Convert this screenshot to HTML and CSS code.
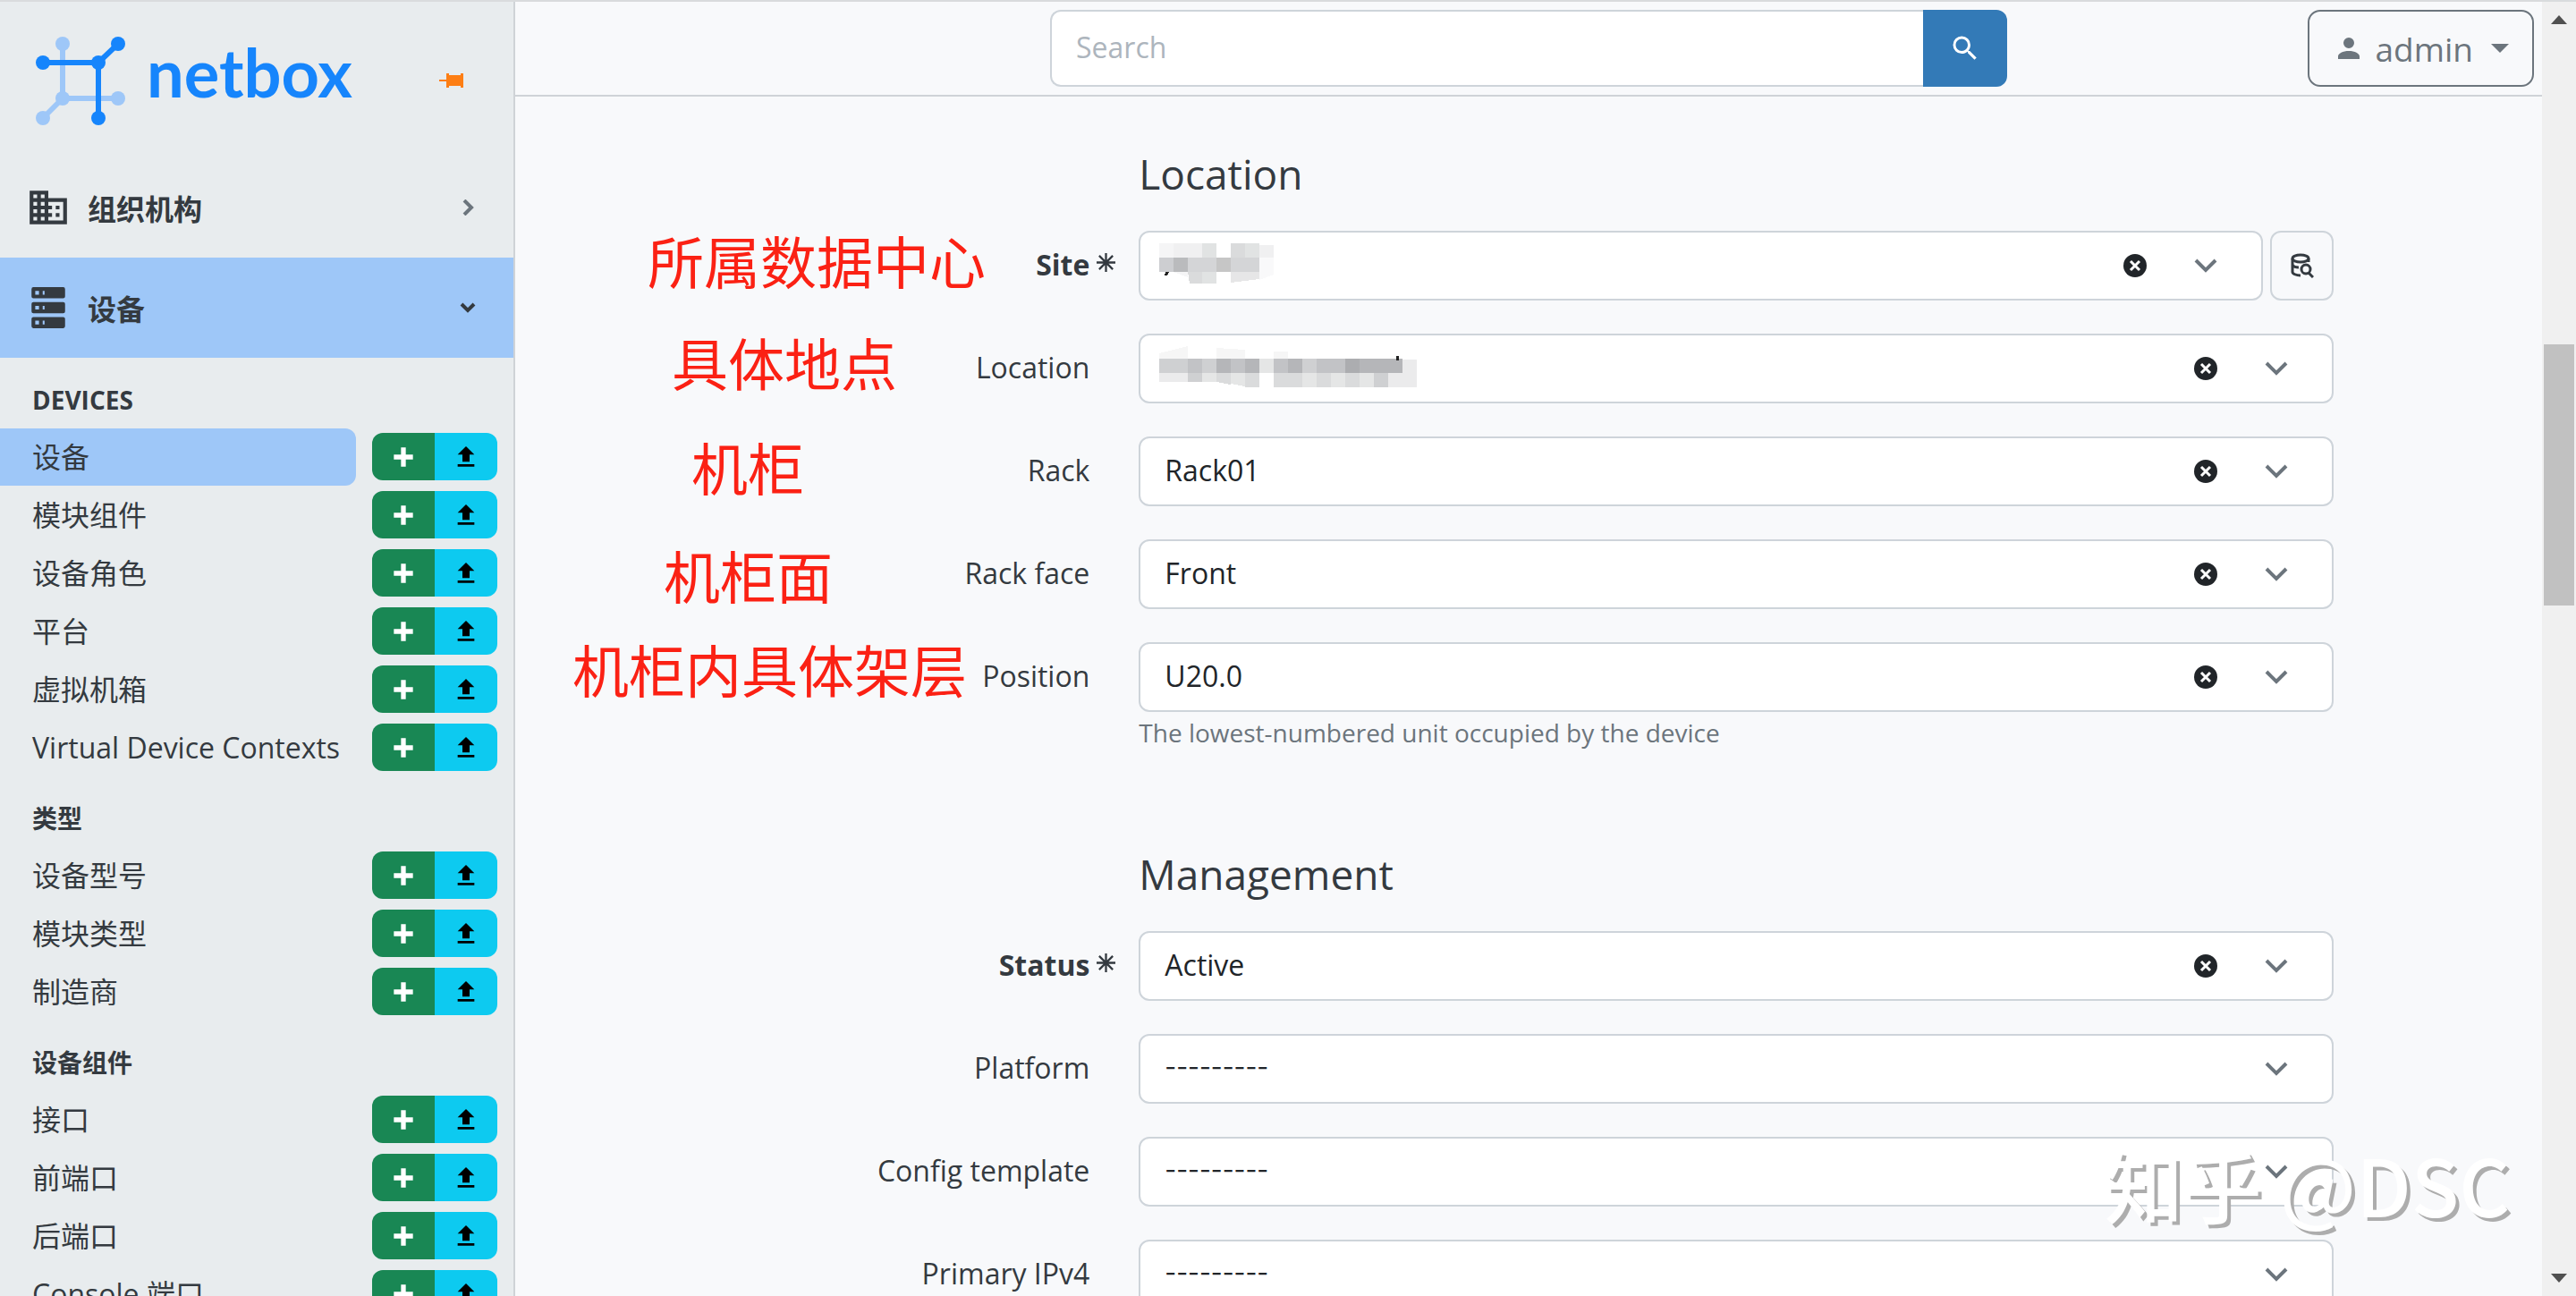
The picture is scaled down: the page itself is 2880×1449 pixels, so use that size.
FILE: index.html
```html
<!DOCTYPE html>
<html lang="zh-CN">
<head>
    <meta charset="UTF-8">
    <meta name="viewport" content="width=device-width, initial-scale=1.0">
    <title>NetBox - Device</title>
    <link rel="stylesheet" href="styles.css">
</head>
<body>
    <!-- Shared icons -->
    <svg class="sprite" aria-hidden="true">
        <symbol id="i-plus" viewBox="0 0 24 24"><path d="M20 14H14V20H10V14H4V10H10V4H14V10H20V14Z"/></symbol>
        <symbol id="i-upload" viewBox="0 0 24 24"><path d="M9,16V10H5L12,3L19,10H15V16H9M5,20V18H19V20H5Z"/></symbol>
        <symbol id="i-down" viewBox="0 0 26 16"><path d="M2 2L13 13L24 2" fill="none" stroke="currentColor" stroke-width="4"/></symbol>
        <symbol id="i-clear" viewBox="0 0 28 28"><circle cx="14" cy="14" r="13"/><path d="M9 9L19 19M19 9L9 19" stroke="#fff" stroke-width="3"/></symbol>
        <symbol id="i-star" viewBox="0 0 22 22"><path d="M11 0V22M0 11H22M3 3L19 19M19 3L3 19" stroke="currentColor" stroke-width="2.4"/></symbol>
    </svg>

    <nav class="sidebar">
        <div class="brand">
            <a class="logo" href="#">
                <svg class="logo-mark" viewBox="0 0 100 100">
                    <g fill="#9ec7f8" stroke="#9ec7f8">
                        <path d="M30 9V70H92M30 70L8 92" fill="none" stroke-width="6"/>
                        <g stroke="none"><circle cx="30" cy="9" r="8"/><circle cx="30" cy="70" r="8"/><circle cx="92" cy="70" r="8"/><circle cx="8" cy="92" r="8"/></g>
                    </g>
                    <g fill="#1685fc" stroke="#1685fc">
                        <path d="M8 30H70V92M70 30L92 9" fill="none" stroke-width="6"/>
                        <g stroke="none"><circle cx="8" cy="30" r="8"/><circle cx="70" cy="30" r="8"/><circle cx="92" cy="9" r="8"/><circle cx="70" cy="92" r="8"/></g>
                    </g>
                </svg>
                <span class="logo-text">netbox</span>
            </a>
            <button class="pin" type="button" aria-label="Pin sidebar">
                <svg viewBox="0 0 27 16"><path d="M0 7H8V0H11V2H24V0H27V16H24V14H11V16H8V9H0Z"/></svg>
            </button>
        </div>

        <button class="menu" type="button">
            <svg class="menu-icon" viewBox="0 0 24 24"><path d="M18,15H16V17H18M18,11H16V13H18M20,19H12V17H14V15H12V13H14V11H12V9H20M10,7H8V5H10M10,11H8V9H10M10,15H8V13H10M10,19H8V17H10M6,7H4V5H6M6,11H4V9H6M6,15H4V13H6M6,19H4V17H6M12,7V3H2V21H22V7H12Z"/></svg>
            <span>组织机构</span>
            <svg class="menu-arrow closed" viewBox="0 0 18 18"><path d="M5 1L13 9L5 17" /></svg>
        </button>
        <button class="menu active" type="button">
            <svg class="menu-icon" viewBox="0 0 24 24"><path d="M4,1H20A1,1 0 0,1 21,2V6A1,1 0 0,1 20,7H4A1,1 0 0,1 3,6V2A1,1 0 0,1 4,1M4,9H20A1,1 0 0,1 21,10V14A1,1 0 0,1 20,15H4A1,1 0 0,1 3,14V10A1,1 0 0,1 4,9M4,17H20A1,1 0 0,1 21,18V22A1,1 0 0,1 20,23H4A1,1 0 0,1 3,22V18A1,1 0 0,1 4,17M9,5H10V3H9V5M9,13H10V11H9V13M9,21H10V19H9V21M5,3V5H7V3H5M5,11V13H7V11H5M5,19V21H7V19H5Z"/></svg>
            <span>设备</span>
            <svg class="menu-arrow" viewBox="0 0 18 18"><path d="M2 5L9 12L16 5"/></svg>
        </button>

        <h6 class="group">DEVICES</h6>
        <div class="item active"><a href="#">设备</a><button class="add" type="button" aria-label="Add"><svg><use href="#i-plus"/></svg></button><button class="import" type="button" aria-label="Import"><svg><use href="#i-upload"/></svg></button></div>
        <div class="item"><a href="#">模块组件</a><button class="add" type="button" aria-label="Add"><svg><use href="#i-plus"/></svg></button><button class="import" type="button" aria-label="Import"><svg><use href="#i-upload"/></svg></button></div>
        <div class="item"><a href="#">设备角色</a><button class="add" type="button" aria-label="Add"><svg><use href="#i-plus"/></svg></button><button class="import" type="button" aria-label="Import"><svg><use href="#i-upload"/></svg></button></div>
        <div class="item"><a href="#">平台</a><button class="add" type="button" aria-label="Add"><svg><use href="#i-plus"/></svg></button><button class="import" type="button" aria-label="Import"><svg><use href="#i-upload"/></svg></button></div>
        <div class="item"><a href="#">虚拟机箱</a><button class="add" type="button" aria-label="Add"><svg><use href="#i-plus"/></svg></button><button class="import" type="button" aria-label="Import"><svg><use href="#i-upload"/></svg></button></div>
        <div class="item"><a href="#">Virtual Device Contexts</a><button class="add" type="button" aria-label="Add"><svg><use href="#i-plus"/></svg></button><button class="import" type="button" aria-label="Import"><svg><use href="#i-upload"/></svg></button></div>

        <h6 class="group">类型</h6>
        <div class="item"><a href="#">设备型号</a><button class="add" type="button" aria-label="Add"><svg><use href="#i-plus"/></svg></button><button class="import" type="button" aria-label="Import"><svg><use href="#i-upload"/></svg></button></div>
        <div class="item"><a href="#">模块类型</a><button class="add" type="button" aria-label="Add"><svg><use href="#i-plus"/></svg></button><button class="import" type="button" aria-label="Import"><svg><use href="#i-upload"/></svg></button></div>
        <div class="item"><a href="#">制造商</a><button class="add" type="button" aria-label="Add"><svg><use href="#i-plus"/></svg></button><button class="import" type="button" aria-label="Import"><svg><use href="#i-upload"/></svg></button></div>

        <h6 class="group">设备组件</h6>
        <div class="item"><a href="#">接口</a><button class="add" type="button" aria-label="Add"><svg><use href="#i-plus"/></svg></button><button class="import" type="button" aria-label="Import"><svg><use href="#i-upload"/></svg></button></div>
        <div class="item"><a href="#">前端口</a><button class="add" type="button" aria-label="Add"><svg><use href="#i-plus"/></svg></button><button class="import" type="button" aria-label="Import"><svg><use href="#i-upload"/></svg></button></div>
        <div class="item"><a href="#">后端口</a><button class="add" type="button" aria-label="Add"><svg><use href="#i-plus"/></svg></button><button class="import" type="button" aria-label="Import"><svg><use href="#i-upload"/></svg></button></div>
        <div class="item"><a href="#">Console 端口</a><button class="add" type="button" aria-label="Add"><svg><use href="#i-plus"/></svg></button><button class="import" type="button" aria-label="Import"><svg><use href="#i-upload"/></svg></button></div>
    </nav>

    <main class="main">
        <header class="topbar">
            <form class="search">
                <input type="text" placeholder="Search" aria-label="Search">
                <button type="button" aria-label="Search">
                    <svg viewBox="0 0 24 24"><path d="M9.5,3A6.5,6.5 0 0,1 16,9.5C16,11.11 15.41,12.59 14.44,13.73L14.71,14H15.5L20.5,19L19,20.5L14,15.5V14.71L13.73,14.44C12.59,15.41 11.11,16 9.5,16A6.5,6.5 0 0,1 3,9.5A6.5,6.5 0 0,1 9.5,3M9.5,5C7,5 5,7 5,9.5C5,12 7,14 9.5,14C12,14 14,12 14,9.5C14,7 12,5 9.5,5Z"/></svg>
                </button>
            </form>
            <button class="user" type="button">
                <svg class="user-icon" viewBox="0 0 24 24"><path d="M12,4A4,4 0 0,1 16,8A4,4 0 0,1 12,12A4,4 0 0,1 8,8A4,4 0 0,1 12,4M12,14C16.42,14 20,15.79 20,18V20H4V18C4,15.79 7.58,14 12,14Z"/></svg>
                admin
                <svg class="caret" viewBox="0 0 20 10"><path d="M0 0H20L10 10Z"/></svg>
            </button>
        </header>

        <form class="device-form">
            <section>
                <h2>Location</h2>
                <div class="row">
                    <span class="note note-site">所属数据中心</span>
                    <label class="required" for="site">Site <svg><use href="#i-star"/></svg></label>
                    <div class="field">
                        <div class="select">
                            <select id="site"><option></option></select>
                            <!-- hidden value -->
                            <svg class="mosaic mosaic-site" viewBox="0 0 128 46" shape-rendering="crispEdges">
                                <path fill="#f5f5f6" d="M0 0h16v16H0zM16 32h16v6z"/>
                                <path fill="#f0f0f1" d="M16 0h32v16H16zM112 2h16v14h-16z"/>
                                <path fill="#e1e3e3" d="M48 0h16v16H48zM96 0h16v16H96zM48 32h16v13H48z"/>
                                <path fill="#dadbdc" d="M80 0h16v16H80zM32 32h16v13H34z"/>
                                <path fill="#cdced1" d="M0 16h16v16H0z"/>
                                <path fill="#babbbd" d="M16 16h16v16H16z"/>
                                <path fill="#d4d5d7" d="M32 16h32v16H32zM80 16h32v16H80z"/>
                                <path fill="#c6c6c6" d="M64 16h16v16H64z"/>
                                <path fill="#f9f9fa" d="M112 16h16v19l-16 6z"/>
                                <path fill="#e6e6e7" d="M80 32h32v8l-32 4z"/>
                                <path fill="#222" d="M7 32h4l-2 4H6z"/>
                            </svg>
                            <button class="clear" type="button" aria-label="Clear"><svg><use href="#i-clear"/></svg></button>
                            <svg class="arrow"><use href="#i-down"/></svg>
                        </div>
                        <button class="lookup" type="button" aria-label="Advanced search">
                            <svg viewBox="0 0 26 28"><ellipse cx="11" cy="6" rx="9" ry="4"/><path d="M2 6V21C2 23 6 25 11 25M2 13C3 15 5 16 9 16M2 14C3 15 5 16 9 16M20 6V10"/><circle cx="17" cy="18" r="5"/><path d="M20 22L25 27"/></svg>
                        </button>
                    </div>
                </div>
                <div class="row">
                    <span class="note note-location">具体地点</span>
                    <label for="location">Location</label>
                    <div class="field">
                        <div class="select">
                            <select id="location"><option></option></select>
                            <svg class="mosaic mosaic-location" viewBox="0 0 288 46" shape-rendering="crispEdges">
                                <path fill="#f6f6f6" d="M0 8l32-8v14H0zM64 2l32 2v10H64zM128 6h16v8h-16z"/>
                                <path fill="#cfd0d2" d="M0 14h32v16H0zM48 14h16v16H48zM160 14h16v16h-16zM32 30h16v10H32zM240 30h16v16h-16z"/>
                                <path fill="#c2c3c6" d="M32 14h16v16H32zM80 14h16v16H80zM128 14h16v16h-16zM176 14h32v16h-32z"/>
                                <path fill="#b5b6b9" d="M64 14h16v16H64zM96 14h16v16H96zM144 14h16v16h-16zM224 14h48v16h-48z"/>
                                <path fill="#acadb0" d="M208 14h16v16h-16z"/>
                                <path fill="#e5e6e6" d="M112 14h16v16h-16zM48 30h16v10H48zM80 30h16v15l-16-3zM160 30h16v16h-16zM192 30h16v16h-16zM224 30h16v16h-16z"/>
                                <path fill="#ebebec" d="M0 30h32v10H0zM256 30h32v16h-32zM272 15h16v15h-16z"/>
                                <path fill="#dadbdc" d="M64 30h16v13l-16-3zM96 30h16v16H96zM128 30h32v16h-32zM176 30h16v16h-16zM208 30h16v16h-16z"/>
                                <path fill="#222" d="M265 11h3v5h-3z"/>
                            </svg>
                            <button class="clear" type="button" aria-label="Clear"><svg><use href="#i-clear"/></svg></button>
                            <svg class="arrow"><use href="#i-down"/></svg>
                        </div>
                    </div>
                </div>
                <div class="row">
                    <span class="note note-rack">机柜</span>
                    <label for="rack">Rack</label>
                    <div class="field">
                        <div class="select">
                            <select id="rack"><option>Rack01</option></select>
                            <button class="clear" type="button" aria-label="Clear"><svg><use href="#i-clear"/></svg></button>
                            <svg class="arrow"><use href="#i-down"/></svg>
                        </div>
                    </div>
                </div>
                <div class="row">
                    <span class="note note-face">机柜面</span>
                    <label for="face">Rack face</label>
                    <div class="field">
                        <div class="select">
                            <select id="face"><option>Front</option></select>
                            <button class="clear" type="button" aria-label="Clear"><svg><use href="#i-clear"/></svg></button>
                            <svg class="arrow"><use href="#i-down"/></svg>
                        </div>
                    </div>
                </div>
                <div class="row">
                    <span class="note note-position">机柜内具体架层</span>
                    <label for="position">Position</label>
                    <div class="field">
                        <div class="select">
                            <select id="position"><option>U20.0</option></select>
                            <button class="clear" type="button" aria-label="Clear"><svg><use href="#i-clear"/></svg></button>
                            <svg class="arrow"><use href="#i-down"/></svg>
                        </div>
                        <p class="help">The lowest-numbered unit occupied by the device</p>
                    </div>
                </div>
            </section>

            <section>
                <h2>Management</h2>
                <div class="row">
                    <label class="required" for="status">Status <svg><use href="#i-star"/></svg></label>
                    <div class="field">
                        <div class="select">
                            <select id="status"><option>Active</option></select>
                            <button class="clear" type="button" aria-label="Clear"><svg><use href="#i-clear"/></svg></button>
                            <svg class="arrow"><use href="#i-down"/></svg>
                        </div>
                    </div>
                </div>
                <div class="row">
                    <label for="platform">Platform</label>
                    <div class="field">
                        <div class="select">
                            <select class="empty" id="platform"><option>---------</option></select>
                            <svg class="arrow"><use href="#i-down"/></svg>
                        </div>
                    </div>
                </div>
                <div class="row">
                    <label for="template">Config template</label>
                    <div class="field">
                        <div class="select">
                            <select class="empty" id="template"><option>---------</option></select>
                            <svg class="arrow"><use href="#i-down"/></svg>
                        </div>
                    </div>
                </div>
                <div class="row">
                    <label for="ipv4">Primary IPv4</label>
                    <div class="field">
                        <div class="select">
                            <select class="empty" id="ipv4"><option>---------</option></select>
                            <svg class="arrow"><use href="#i-down"/></svg>
                        </div>
                    </div>
                </div>
            </section>
        </form>
    </main>

    <div class="scrollbar" aria-hidden="true">
        <svg viewBox="0 0 18 10"><path d="M0 10H18L9 0Z"/></svg>
        <div class="track"><div class="thumb"></div></div>
        <svg viewBox="0 0 18 10"><path d="M0 0H18L9 10Z"/></svg>
    </div>

    <div class="watermark">知乎 @DSC</div>
</body>
</html>
```
FILE: styles.css
```css
* {
    box-sizing: border-box;
}

body {
    margin: 0;
    height: 100vh;
    display: flex;
    overflow: hidden;
    position: relative;
    border-top: 2px solid #d9dbdd;
    font-family: "Open Sans", "Noto Sans CJK SC", sans-serif;
    font-size: 32px;
    color: #343a40;
    background-color: #f8f9fb;
}

button,
input,
select {
    font: inherit;
    color: inherit;
    margin: 0;
    padding: 0;
    border: 0;
    background: none;
}

svg {
    display: block;
    flex: none;
    fill: currentColor;
}

.sprite {
    position: absolute;
    width: 0;
    height: 0;
}

/* Sidebar */
.sidebar {
    width: 20%;
    flex: none;
    overflow: hidden;
    background-color: #e8ecee;
    border-right: 2px solid #cfd3d7;
}

.brand {
    height: 174px;
    padding: 0 56px 0 40px;
    display: flex;
    align-items: flex-start;
    justify-content: space-between;
}

.logo {
    display: flex;
    gap: 24px;
    padding-top: 38px;
    color: #1685fc;
    text-decoration: none;
}

.logo-mark {
    width: 100px;
    height: 100px;
}

.logo-text {
    font-family: Lato, sans-serif;
    font-weight: bold;
    font-size: 74px;
    line-height: 82px;
}

.pin {
    margin-top: 80px;
    color: #fd7e14;
}

.pin svg {
    width: 27px;
    height: 16px;
}

.menu {
    width: 100%;
    height: 112px;
    padding: 0 42px 0 29px;
    display: flex;
    align-items: center;
    font-weight: bold;
    text-align: left;
}

.menu.active {
    background-color: #9ec7f8;
}

.menu span {
    flex: 1;
    margin-left: 19px;
}

.menu-icon {
    width: 50px;
    height: 50px;
}

.menu-arrow {
    width: 18px;
    height: 18px;
    fill: none;
    stroke: currentColor;
    stroke-width: 4;
}

.menu-arrow.closed {
    color: #6c757d;
}

.group {
    margin: 0;
    padding: 30px 36px 14px;
    font-size: 28px;
    line-height: 34px;
}

.item {
    display: flex;
    align-items: center;
    height: 65px;
    padding-right: 18px;
}

.item a {
    flex: 1;
    margin-right: 18px;
    padding-left: 36px;
    line-height: 64px;
    color: inherit;
    text-decoration: none;
    white-space: nowrap;
    border-radius: 0 12px 12px 0;
}

.item.active a {
    background-color: #9ec7f8;
}

.item button {
    width: 70px;
    height: 53px;
    display: flex;
    align-items: center;
    justify-content: center;
}

.item button svg {
    width: 32px;
    height: 32px;
}

.add {
    color: #fff;
    background-color: #198754;
    border-radius: 12px 0 0 12px;
}

.import {
    color: #000;
    background-color: #0dcaf0;
    border-radius: 0 12px 12px 0;
}

/* Top bar */
.main {
    flex: 1;
    min-width: 0;
}

.topbar {
    height: 106px;
    padding: 0 9px;
    display: grid;
    grid-template-columns: 1fr 1070px 1fr;
    align-items: center;
    border-bottom: 2px solid #cfd3d7;
}

.search {
    grid-column: 2;
    display: flex;
    height: 86px;
}

.search input {
    flex: 1;
    min-width: 0;
    padding: 0 27px 4px;
    background-color: #fff;
    border: 2px solid #ced4da;
    border-right: 0;
    border-radius: 12px 0 0 12px;
}

.search input::placeholder {
    color: #adb5bd;
    opacity: 1;
}

.search button {
    width: 94px;
    display: flex;
    align-items: center;
    justify-content: center;
    color: #fff;
    background-color: #337ab7;
    border-radius: 0 12px 12px 0;
}

.search button svg {
    width: 36px;
    height: 36px;
}

.user {
    justify-self: end;
    height: 86px;
    padding: 0 26px;
    display: flex;
    align-items: center;
    font-size: 37px;
    color: #6c757d;
    border: 2px solid #6c757d;
    border-radius: 14px;
}

.user-icon {
    width: 36px;
    height: 36px;
    margin-right: 12px;
}

.caret {
    width: 20px;
    height: 10px;
    margin-left: 20px;
}

/* Form */
.device-form {
    padding: 58px 233px 0 0;
}

.device-form section {
    margin-bottom: 112px;
}

.device-form h2 {
    margin: 0 0 36px 34.3%;
    font-size: 46px;
    font-weight: normal;
    line-height: 56px;
}

.row {
    position: relative;
    display: grid;
    grid-template-columns: 34.3% 1fr;
    margin-bottom: 37px;
}

.row:last-child {
    margin-bottom: 0;
}

.row label {
    padding-right: 55px;
    line-height: 76px;
    text-align: right;
}

.row .required {
    display: flex;
    align-items: center;
    justify-content: flex-end;
    gap: 8px;
    height: 76px;
    padding-right: 26px;
    font-weight: bold;
}

.required svg {
    width: 21px;
    height: 21px;
    margin-bottom: 6px;
}

.field {
    display: flex;
    flex-wrap: wrap;
    gap: 5px 8px;
}

.select {
    position: relative;
    flex: 1;
    height: 78px;
    padding-right: 49px;
    display: flex;
    align-items: center;
    background-color: #fff;
    border: 2px solid #ced4da;
    border-radius: 12px;
}

.select select {
    flex: 1;
    height: 74px;
    padding: 0 27px 4px;
    appearance: none;
    color: #212529;
}

.select .empty {
    font-family: Inter, sans-serif;
    font-size: 28px;
}

.clear {
    margin-right: 52px;
    color: #212529;
}

.clear svg {
    width: 28px;
    height: 28px;
}

.arrow {
    width: 26px;
    height: 16px;
    color: #6c757d;
}

.lookup {
    width: 71px;
    height: 78px;
    display: flex;
    align-items: center;
    justify-content: center;
    border: 2px solid #ced4da;
    border-radius: 12px;
}

.lookup svg {
    width: 26px;
    height: 28px;
    fill: none;
    stroke: currentColor;
    stroke-width: 3;
}

.help {
    width: 100%;
    margin: 0;
    font-size: 28px;
    line-height: 36px;
    color: #6c757d;
}

/* Blocks that hide a value */
.mosaic {
    position: absolute;
    left: 21px;
    top: 12px;
    height: 46px;
}

.mosaic-site {
    width: 128px;
}

.mosaic-location {
    width: 288px;
}

/* Red notes beside the labels */
.note {
    position: absolute;
    font-size: 63px;
    line-height: 76px;
    color: #fb2114;
    white-space: nowrap;
}

.note-site {
    left: 148px;
    top: -3px;
}

.note-location {
    left: 175px;
    top: -4px;
}

.note-rack {
    left: 197px;
    top: -2px;
}

.note-face {
    left: 166px;
    top: 4px;
}

.note-position {
    left: 64px;
    top: -6px;
}

/* Scrollbar */
.scrollbar {
    width: 38px;
    flex: none;
    padding: 15px 2px;
    display: flex;
    flex-direction: column;
    align-items: center;
    color: #505050;
    background-color: #f0f0f0;
}

.scrollbar svg {
    width: 18px;
    height: 10px;
}

.track {
    flex: 1;
    width: 100%;
    padding-top: 358px;
}

.thumb {
    height: 292px;
    background-color: #c1c1c1;
}

.watermark {
    position: absolute;
    right: 74px;
    bottom: 66px;
    font-family: "Noto Sans CJK SC", sans-serif;
    font-weight: 500;
    font-size: 88px;
    line-height: 120px;
    color: #fff;
    text-shadow: 4px 4px 0 #adadad;
}
```
